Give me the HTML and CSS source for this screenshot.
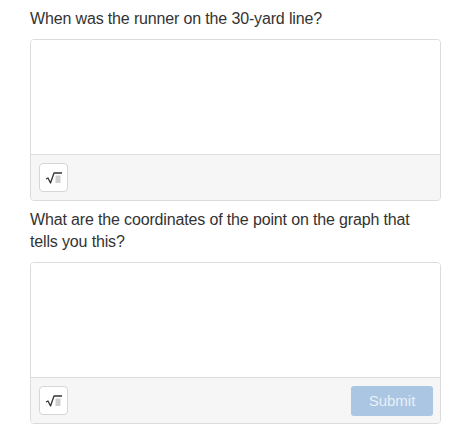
FILE: index.html
```html
<!DOCTYPE html>
<html>
<head>
<meta charset="utf-8">
<link rel="stylesheet" href="styles.css">
</head>
<body>
<div class="page">
  <section class="question">
    <p class="prompt">When was the runner on the 30-yard line?</p>
    <div class="answer">
      <div class="input-area"></div>
      <div class="toolbar">
        <button class="math-btn" type="button" aria-label="Insert square root">
          <svg width="18" height="12" viewBox="0 0 18 12"><path d="M1 7 L3 6 L5.5 11 L9 1 L17 1" fill="none" stroke="#333" stroke-width="1.3" stroke-linejoin="round"/><rect x="10.5" y="3.5" width="5" height="7.5" fill="#cfcfcf"/></svg>
        </button>
      </div>
    </div>
  </section>
  <section class="question">
    <p class="prompt">What are the coordinates of the point on the graph that tells you this?</p>
    <div class="answer">
      <div class="input-area"></div>
      <div class="toolbar">
        <button class="math-btn" type="button" aria-label="Insert square root">
          <svg width="18" height="12" viewBox="0 0 18 12"><path d="M1 7 L3 6 L5.5 11 L9 1 L17 1" fill="none" stroke="#333" stroke-width="1.3" stroke-linejoin="round"/><rect x="10.5" y="3.5" width="5" height="7.5" fill="#cfcfcf"/></svg>
        </button>
        <button class="submit-btn" type="button" disabled>Submit</button>
      </div>
    </div>
  </section>
</div>
</body>
</html>
```
FILE: styles.css
```css
html, body {
  margin: 0;
  padding: 0;
  background: #fff;
}
.page {
  padding: 8px 33px 0 30px;
  font-family: "Liberation Sans", Arial, sans-serif;
  color: #333;
}
.question {
  display: flex;
  flex-direction: column;
}
.prompt {
  margin: 0 0 9px 0;
  max-width: 395px;
  font-size: 16px;
  line-height: 22px;
  letter-spacing: -0.15px;
}
.answer {
  border: 1px solid #dcdcdc;
  border-radius: 4px;
  overflow: hidden;
  margin-bottom: 8px;
}
.input-area {
  height: 114px;
  background: #fff;
  border-bottom: 1px solid #dcdcdc;
}
.toolbar {
  background: #f6f6f6;
  height: 45px;
  padding: 0 7px 0 8px;
  display: flex;
  align-items: center;
  justify-content: space-between;
}
.math-btn {
  width: 29px;
  height: 29px;
  padding: 0;
  border: 1px solid #d6d6d6;
  border-radius: 4px;
  background: #fff;
  display: flex;
  align-items: center;
  justify-content: center;
}
.submit-btn {
  width: 82px;
  height: 30px;
  border: none;
  border-radius: 3px;
  background: #abc6e2;
  color: #e8f0f8;
  font-family: "Liberation Sans", Arial, sans-serif;
  font-size: 15px;
}
```
